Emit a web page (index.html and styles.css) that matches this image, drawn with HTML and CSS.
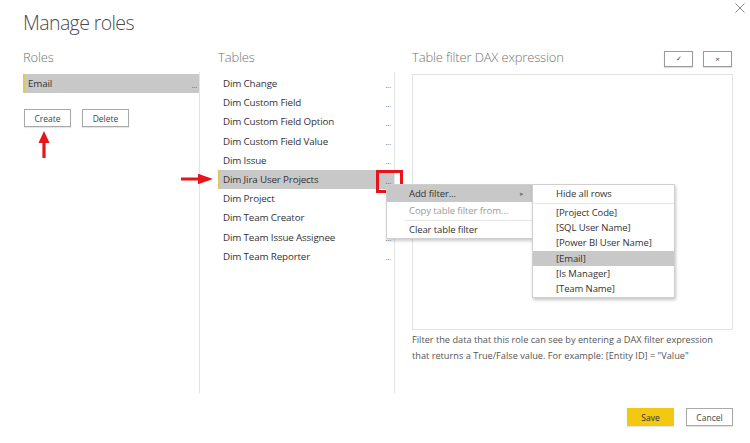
FILE: index.html
```html
<!DOCTYPE html>
<html lang="en">
<head>
<meta charset="utf-8">
<title>Manage roles</title>
<link rel="stylesheet" href="styles.css">
</head>
<body>
<div class="dialog">
  <div class="topbar">
    <h1 class="title">Manage roles</h1>
    <button class="close" aria-label="Close">
      <svg width="10" height="10" viewBox="0 0 10 10"><path d="M0.5 0.5L9.5 9.5M9.5 0.5L0.5 9.5" stroke="#777" stroke-width="0.9" fill="none"/></svg>
    </button>
  </div>

  <div class="grid">
    <div class="col-head roles-head">Roles</div>
    <div class="col-head tables-head">Tables</div>
    <div class="col-head dax-head">
      <span>Table filter DAX expression</span>
      <div class="mini-btns">
        <button class="mini-btn">&#10003;</button>
        <button class="mini-btn x">&#215;</button>
      </div>
    </div>

    <div class="roles-body">
      <div class="row selected role-row"><span>Email</span><span class="dots">...</span></div>
      <div class="role-actions">
        <button class="btn">Create</button>
        <button class="btn">Delete</button>
      </div>
    </div>

    <div class="tables-body">
      <div class="row"><span>Dim Change</span><span class="dots">...</span></div>
      <div class="row"><span>Dim Custom Field</span><span class="dots">...</span></div>
      <div class="row"><span>Dim Custom Field Option</span><span class="dots">...</span></div>
      <div class="row"><span>Dim Custom Field Value</span><span class="dots">...</span></div>
      <div class="row"><span>Dim Issue</span><span class="dots">...</span></div>
      <div class="row selected"><span>Dim Jira User Projects</span><span class="dots">...</span></div>
      <div class="row"><span>Dim Project</span><span class="dots">...</span></div>
      <div class="row"><span>Dim Team Creator</span><span class="dots">...</span></div>
      <div class="row"><span>Dim Team Issue Assignee</span><span class="dots">...</span></div>
      <div class="row"><span>Dim Team Reporter</span><span class="dots">...</span></div>
    </div>

    <div class="dax-body">
      <div class="dax-box"></div>
      <p class="help">Filter the data that this role can see by entering a DAX filter expression that returns a True/False value. For example: [Entity ID] = "Value"</p>
    </div>
  </div>

  <div class="footer">
    <button class="btn btn-save">Save</button>
    <button class="btn btn-cancel">Cancel</button>
  </div>

  <!-- annotations -->
  <svg class="arrow-up" width="14" height="28" viewBox="0 0 14 28"><path d="M7 0L12.5 12H8.6V27H5.4V12H1.5Z" fill="#e8141b"/></svg>
  <svg class="arrow-right" width="32" height="12" viewBox="0 0 32 12"><path d="M32 6L17 0.8V4.6H0V7.4H17V11.2Z" fill="#e8141b"/></svg>
  <div class="red-box"></div>

  <!-- context menu -->
  <div class="menu">
    <div class="menu-item active"><span>Add filter...</span><span class="sub-arrow">&#9656;</span></div>
    <div class="menu-item disabled">Copy table filter from...</div>
    <div class="menu-sep"></div>
    <div class="menu-item">Clear table filter</div>
  </div>
  <div class="submenu">
    <div class="sub-item first">Hide all rows</div>
    <div class="menu-sep"></div>
    <div class="sub-item">[Project Code]</div>
    <div class="sub-item">[SQL User Name]</div>
    <div class="sub-item">[Power BI User Name]</div>
    <div class="sub-item active">[Email]</div>
    <div class="sub-item">[Is Manager]</div>
    <div class="sub-item">[Team Name]</div>
  </div>
</div>
</body>
</html>
```

FILE: styles.css
```css
* { box-sizing: border-box; }

html, body {
  margin: 0;
  padding: 0;
  background: #ffffff;
}

body {
  font-family: "Open Sans", "Noto Sans", "Liberation Sans", sans-serif;
  color: #333333;
  width: 750px;
  height: 443px;
  overflow: hidden;
}

.dialog {
  position: relative;
  width: 750px;
  height: 443px;
  padding: 0 17px 0 23px;
}

button {
  font-family: inherit;
  cursor: default;
}

/* ---------- top bar ---------- */
.topbar {
  display: flex;
  justify-content: space-between;
  align-items: flex-start;
  height: 46px;
}

.title {
  margin: 0;
  padding-top: 10px;
  font-size: 19.5px;
  line-height: 26px;
  font-weight: 300;
  color: #4a4a4a;
  letter-spacing: -0.6px;
}

.close {
  margin: 3px -12px 0 0;
  padding: 0;
  width: 10px;
  height: 10px;
  border: 0;
  background: transparent;
  display: flex;
}

/* ---------- grid ---------- */
.grid {
  display: grid;
  grid-template-columns: 177px 195px 1fr;
  grid-template-rows: 24px 321px;
  row-gap: 2px;
}

.col-head {
  display: flex;
  align-items: center;
  font-size: 13px;
  font-weight: 300;
  color: #737373;
  padding-bottom: 3px;
  letter-spacing: -0.15px;
}

.tables-head { padding-left: 18px; }

.dax-head {
  padding-left: 17px;
  justify-content: space-between;
}

.mini-btns {
  display: flex;
  gap: 10px;
  padding-top: 4px;
  margin-right: 1px;
}

.mini-btn {
  width: 29px;
  height: 16px;
  padding: 0;
  border: 1px solid #9a9a9a;
  background: #ffffff;
  font-size: 7px;
  line-height: 14px;
  color: #444444;
  box-shadow: 0 1px 1px rgba(0,0,0,0.12);
}

.mini-btn.x { font-size: 8px; }

/* ---------- lists ---------- */
.roles-body {
  border-right: 1px solid #e3e3e3;
  padding-top: 2px;
}

.tables-body {
  border-right: 1px solid #e3e3e3;
  padding-top: 2px;
  padding-left: 18px;
}

.row {
  display: flex;
  justify-content: space-between;
  align-items: center;
  height: 19.2px;
  padding: 0 3px 0 3px;
  border-left: 2px solid transparent;
  font-size: 9.8px;
  letter-spacing: -0.15px;
  color: #333333;
}

.row.selected {
  background: #c8c8c8;
  border-left-color: #e2c85a;
}

.role-row {
  height: 19px;
  padding-right: 2px;
}

.dots {
  font-size: 7px;
  color: #555555;
  letter-spacing: 0;
  padding-top: 3px;
}

.role-actions {
  display: flex;
  gap: 11px;
  margin-top: 16px;
  padding-left: 1px;
}

.btn {
  width: 47px;
  height: 18px;
  padding: 0;
  border: 1px solid #a9a9a9;
  background: #ffffff;
  font-size: 8.5px;
  color: #444444;
  box-shadow: 0 1px 1px rgba(0,0,0,0.10);
}

/* ---------- dax ---------- */
.dax-body {
  padding-left: 17px;
  padding-top: 2px;
}

.dax-box {
  height: 256px;
  border: 1px solid #e2e2e2;
}

.help {
  margin: 2px 0 0 0;
  max-width: 306px;
  font-size: 9.2px;
  line-height: 16px;
  color: #555555;
}

/* ---------- footer ---------- */
.footer {
  display: flex;
  justify-content: flex-end;
  gap: 12px;
  margin-top: 15px;
}

.btn-save {
  background: #f2c811;
  border-color: #f2c811;
  color: #333333;
}

.btn-cancel {
  border-color: #a9a9a9;
}

/* ---------- annotations ---------- */
.arrow-up {
  position: absolute;
  left: 37px;
  top: 131px;
}

.arrow-right {
  position: absolute;
  left: 181px;
  top: 173px;
}

.red-box {
  position: absolute;
  left: 376px;
  top: 170px;
  width: 27px;
  height: 23px;
  border: 3px solid #e8141b;
}

/* ---------- context menu ---------- */
.menu {
  position: absolute;
  left: 386px;
  top: 184px;
  width: 147px;
  background: #ffffff;
  border: 1px solid #cfcfcf;
  box-shadow: 1px 2px 3px rgba(0,0,0,0.2);
  font-size: 9.5px;
  letter-spacing: -0.1px;
  color: #333333;
}

.menu-item {
  display: flex;
  justify-content: space-between;
  align-items: center;
  height: 17px;
  padding: 0 8px 0 22px;
}

.menu-item.active { background: #c8c8c8; }
.menu-item.disabled { color: #9a9a9a; height: 17px; }

.sub-arrow {
  font-size: 7px;
  color: #777777;
}

.menu-sep {
  height: 1px;
  margin: 1px 0 0 18px;
  background: #e6e6e6;
}

.submenu {
  position: absolute;
  left: 532px;
  top: 184px;
  width: 143px;
  background: #ffffff;
  border: 1px solid #cfcfcf;
  box-shadow: 1px 2px 3px rgba(0,0,0,0.22);
  font-size: 9.5px;
  letter-spacing: -0.1px;
  color: #333333;
  padding-bottom: 1px;
}

.sub-item {
  height: 15.2px;
  display: flex;
  align-items: center;
  padding-left: 23px;
}

.sub-item.first { height: 17px; }
.submenu .menu-sep { margin: 1px 0 1px 0; }

.sub-item.active { background: #c8c8c8; }
```
